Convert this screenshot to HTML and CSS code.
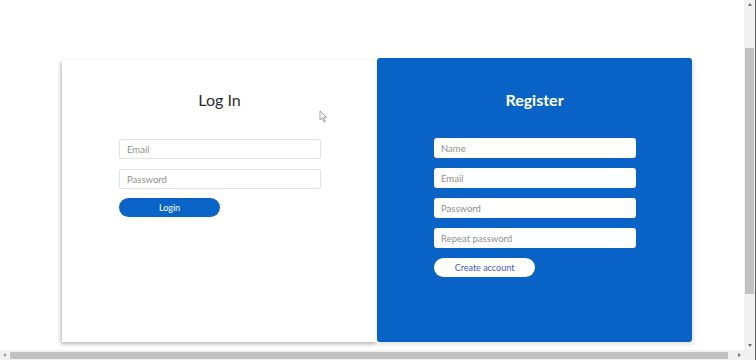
FILE: index.html
```html
<!DOCTYPE html>
<html>
<head>
<meta charset="utf-8">
<link rel="stylesheet" href="styles.css">
</head>
<body>
<div class="screen">
  <main class="page">
    <div class="panels">
      <section class="panel login">
        <h2 class="title">Log In</h2>
        <form class="form">
          <input class="field field-light" type="text" placeholder="Email">
          <input class="field field-light" type="password" placeholder="Password">
          <button class="btn btn-blue" type="button">Login</button>
        </form>
        <svg class="cursor" width="9" height="13" viewBox="0 0 9 13"><path d="M1 1 L1 10 L3.2 8 L5 12 L6.3 11.4 L4.6 7.6 L7.6 7.6 Z" fill="#fff" stroke="#9a9a9a" stroke-width="0.9"/></svg>
      </section>
      <section class="panel register">
        <h2 class="title">Register</h2>
        <form class="form">
          <input class="field field-white" type="text" placeholder="Name">
          <input class="field field-white" type="text" placeholder="Email">
          <input class="field field-white" type="password" placeholder="Password">
          <input class="field field-white" type="password" placeholder="Repeat password">
          <button class="btn btn-white" type="button">Create account</button>
        </form>
      </section>
    </div>
  </main>
  <div class="vscroll">
    <span class="arrow arrow-up"></span>
    <div class="vtrack"><div class="vthumb"></div></div>
    <span class="arrow arrow-down"></span>
  </div>
  <div class="hscroll">
    <span class="arrow arrow-left"></span>
    <div class="htrack"><div class="hthumb"></div></div>
    <span class="arrow arrow-right"></span>
  </div>
  <div class="corner"></div>
</div>
</body>
</html>
```
FILE: styles.css
```css
* { box-sizing: border-box; }
html, body { margin: 0; padding: 0; background: #fff; overflow: hidden; }
body { font-family: "Lato", "Open Sans", sans-serif; }

.screen {
  width: 756px;
  height: 360px;
  display: grid;
  grid-template-columns: 1fr 12px;
  grid-template-rows: 1fr 10px;
}

.page {
  padding: 58px 0 0 62px;
  overflow: hidden;
}

.panels {
  display: flex;
  align-items: flex-end;
  width: 630px;
  height: 284px;
}

.panel {
  position: relative;
  width: 315px;
  display: flex;
  flex-direction: column;
}

.login {
  height: 282px;
  background: #fff;
  box-shadow: -1px 2px 4px rgba(0,0,0,0.3);
  padding-top: 30px;
}

.register {
  height: 284px;
  background: #0963c7;
  border-radius: 3px;
  padding-top: 32px;
  box-shadow: 1px 2px 5px rgba(0,0,0,0.15);
}

.title {
  margin: 0;
  height: 20px;
  line-height: 20px;
  text-align: center;
  font-size: 16px;
  font-weight: 400;
  color: #2b2b2b;
}

.register .title {
  color: #fff;
  font-weight: 700;
}

.form {
  margin: 29px 0 0 57px;
  width: 202px;
  display: flex;
  flex-direction: column;
  gap: 10px;
}
.register .form { margin-top: 28px; }

.field {
  height: 20px;
  width: 100%;
  padding: 0 7px;
  font-family: inherit;
  font-size: 9.5px;
  color: #555;
  outline: none;
}
.field::placeholder { color: #8f8f8f; }

.field-light {
  border: 1px solid #e2e2e2;
  border-radius: 2px;
  background: #fff;
}
.field-white {
  border: none;
  border-radius: 3px;
  background: #fff;
}

.btn {
  width: 101px;
  height: 19px;
  border: none;
  border-radius: 10px;
  font-family: inherit;
  font-size: 9px;
  padding: 0;
  cursor: pointer;
}
.login .btn { margin-top: -1px; }
.btn-blue { background: #0a64c8; color: #fff; }
.btn-white { background: #fff; color: #3f5db4; }

.cursor {
  position: absolute;
  left: 257px;
  top: 50px;
}

/* scrollbars */
.vscroll {
  background: #f1f1f1;
  border-right: 1px solid #5a5a5a;
  display: flex;
  flex-direction: column;
  align-items: center;
  padding: 3px 0 3px;
}
.vtrack {
  flex: 1;
  width: 100%;
  padding: 42px 1px 50px 1px;
  display: flex;
}
.vthumb {
  flex: 1;
  background: #c1c1c1;
}

.hscroll {
  background: #f1f1f1;
  display: flex;
  align-items: center;
  padding: 0 3px;
}
.htrack {
  flex: 1;
  height: 100%;
  padding: 2px 10px 1px 4px;
  display: flex;
}
.hthumb {
  flex: 1;
  background: #c1c1c1;
}
.corner { background: #f1f1f1; border-right: 1px solid #5a5a5a; }

.arrow {
  width: 0;
  height: 0;
  display: block;
  flex: none;
}
.arrow-up {
  border-left: 2.5px solid transparent;
  border-right: 2.5px solid transparent;
  border-bottom: 3px solid #707070;
}
.arrow-down {
  border-left: 2.5px solid transparent;
  border-right: 2.5px solid transparent;
  border-top: 3px solid #707070;
}
.arrow-left {
  border-top: 2.5px solid transparent;
  border-bottom: 2.5px solid transparent;
  border-right: 3px solid #a0a0a0;
}
.arrow-right {
  border-top: 2.5px solid transparent;
  border-bottom: 2.5px solid transparent;
  border-left: 3px solid #707070;
}
```
